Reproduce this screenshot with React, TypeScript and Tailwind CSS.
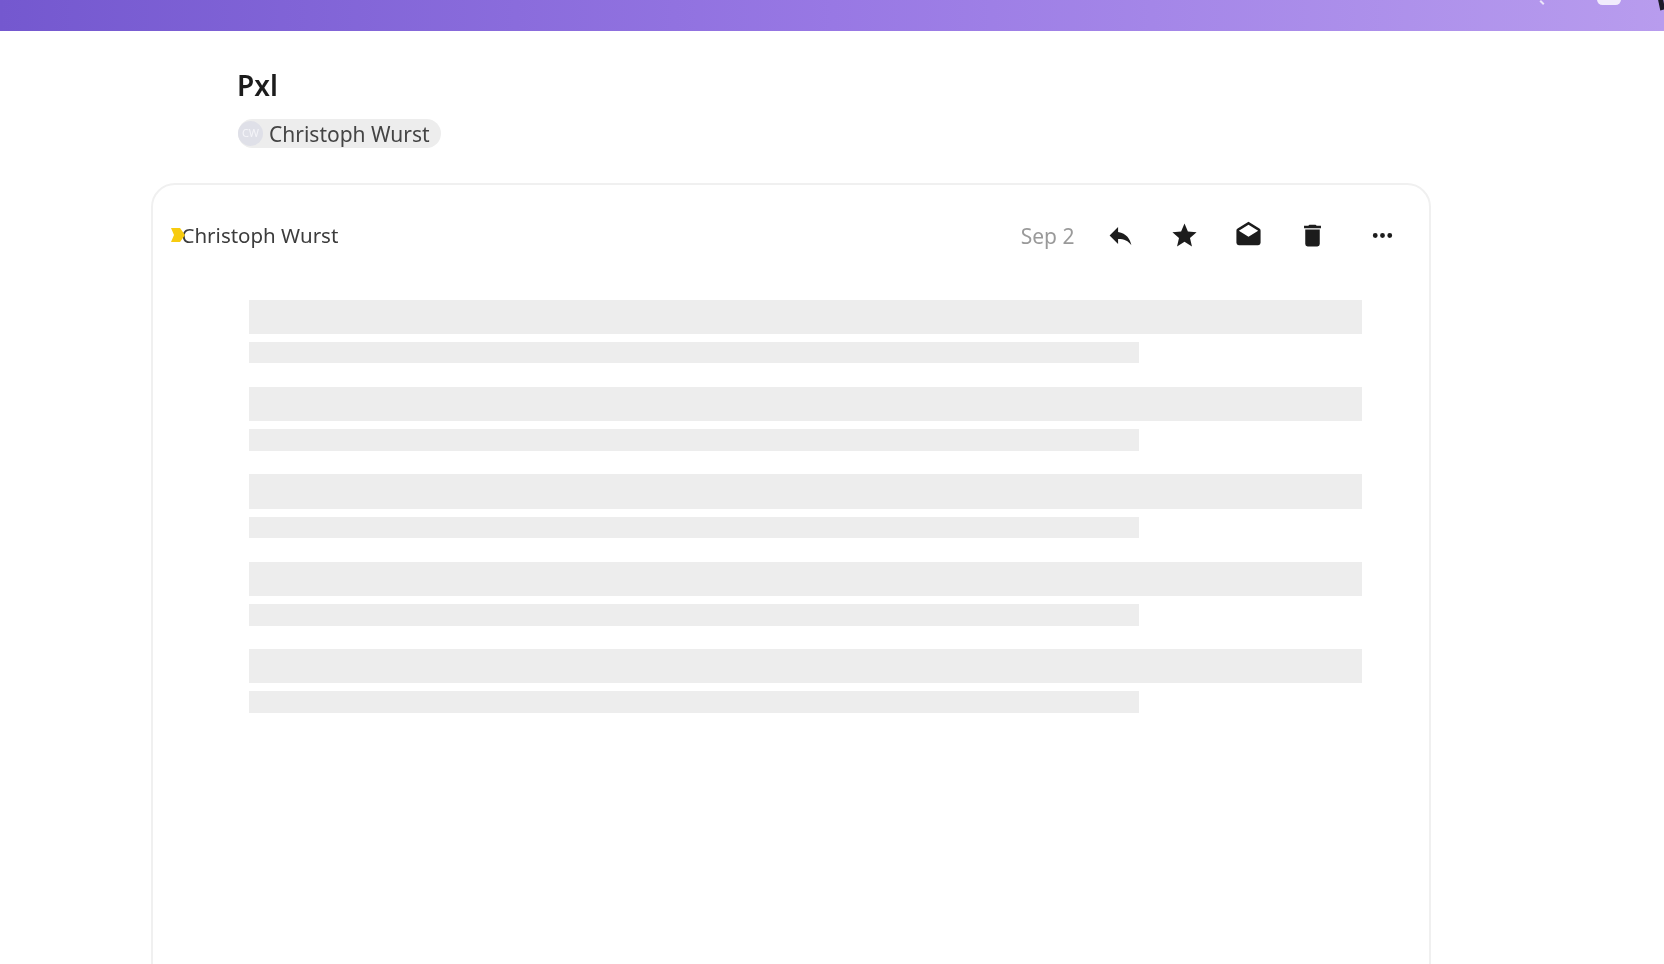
const font = 'font-["Noto_Sans",sans-serif]';

// mdi paths used in the message toolbar
const icons = [
  { d: "M10,9V5L3,12L10,19V14.9C15,14.9 18.5,16.5 21,20C20,15 17,10 10,9Z", w: "w-[64px]" },
  { d: "M12,17.27L18.18,21L16.54,13.97L22,9.24L14.81,8.62L12,2L9.19,8.62L2,9.24L7.45,13.97L5.82,21L12,17.27Z", w: "w-[64px]" },
  { d: "M4,8L12,13L20,8V8L12,3L4,8V8M22,8V18A2,2 0 0,1 20,20H4A2,2 0 0,1 2,18V8C2,7.27 2.39,6.64 2.97,6.29L12,0.64L21.03,6.29C21.61,6.64 22,7.27 22,8Z", w: "w-[64px]" },
  { d: "M19,4H15.5L14.5,3H9.5L8.5,4H5V6H19M6,19A2,2 0 0,0 8,21H16A2,2 0 0,0 18,19V7H6V19Z", w: "w-[64px]" },
  { d: "M16,12A2,2 0 0,1 18,10A2,2 0 0,1 20,12A2,2 0 0,1 18,14A2,2 0 0,1 16,12M10,12A2,2 0 0,1 12,10A2,2 0 0,1 14,12A2,2 0 0,1 12,14A2,2 0 0,1 10,12M4,12A2,2 0 0,1 6,10A2,2 0 0,1 8,12A2,2 0 0,1 6,14A2,2 0 0,1 4,12Z", w: "w-[76px]" },
];

function Header() {
  return (
    <div className="relative h-[31px] shrink-0 overflow-hidden bg-gradient-to-r from-[#7458cf] via-[#9878e4] to-[#b89cee]">
      {/* bottoms of the header icons, mostly cut off */}
      <div className="absolute left-[1541px] top-0 h-[5px] w-[2px] -rotate-45 bg-[#ece6fa]" />
      <div className="absolute left-[1597px] top-[-6px] h-[11px] w-[24px] rounded-full bg-[#f1ecfc]" />
      <div className="absolute left-[1659px] top-[-2px] h-[12px] w-[5px] -rotate-12 bg-[#1c1a28]" />
    </div>
  );
}

function SkeletonBlock() {
  return (
    <div className="mb-[23.4px]">
      <div className="h-[34.4px] w-[1113px] bg-[#ededed]" />
      <div className="mt-[8px] h-[21.6px] w-[890px] bg-[#ededed]" />
    </div>
  );
}

export default function App() {
  return (
    <div className={`flex h-screen flex-col overflow-hidden bg-white ${font}`}>
      <Header />
      <div className="w-[1280.5px] pl-[150.5px] blur-[0.6px]">
        <div className="pl-[87.5px] pt-[37px]">
          <h1 className="-ml-px text-[28px] leading-[34px] font-semibold text-[#1c1c1c]">Pxl</h1>
          <div className="mt-[17px] inline-flex h-[29px] items-center rounded-full bg-[#ededed] pr-[11px]">
            <div className="flex h-[25px] w-[25px] items-center justify-center rounded-full bg-[#dfe0e8] text-[11px] text-[#f4f4f8]">
              CW
            </div>
            <span className="ml-[6px] pt-[1px] text-[21px] leading-none text-[#444444]">Christoph Wurst</span>
          </div>
        </div>

        <div className="mt-[35px] h-[900px] w-[1280px] rounded-[24px] border-2 border-[#f0f0f0] bg-white">
          <div className="flex h-[102px] items-center">
            <div className="relative -mt-[1px] ml-[29px] text-[20.5px] leading-none text-[#3c3c3c]">
              Christoph Wurst
              <svg viewBox="0 0 14 14" className="absolute left-[-11px] top-[3px] h-[14px] w-[14px]">
                <polygon points="0,0 9,0 14,7 9,14 0,14 3,7" fill="#f7cb0f" />
              </svg>
            </div>
            <div className="ml-auto mr-[14px] text-[21px] leading-none text-[#9a9a9a]">Sep 2</div>
            <div className="-mt-[2px] flex items-center pr-[8px]">
              {icons.map((icon, i) => (
                <div key={i} className={`flex justify-center ${icon.w}`}>
                  <svg viewBox="0 0 24 24" className="h-[29px] w-[29px]" fill="#1c1c1c">
                    <path d={icon.d} />
                  </svg>
                </div>
              ))}
            </div>
          </div>
          <div className="ml-[96.5px] mt-[12.5px]">
            {Array.from({ length: 5 }).map((_, i) => (
              <SkeletonBlock key={i} />
            ))}
          </div>
        </div>
      </div>
    </div>
  );
}
